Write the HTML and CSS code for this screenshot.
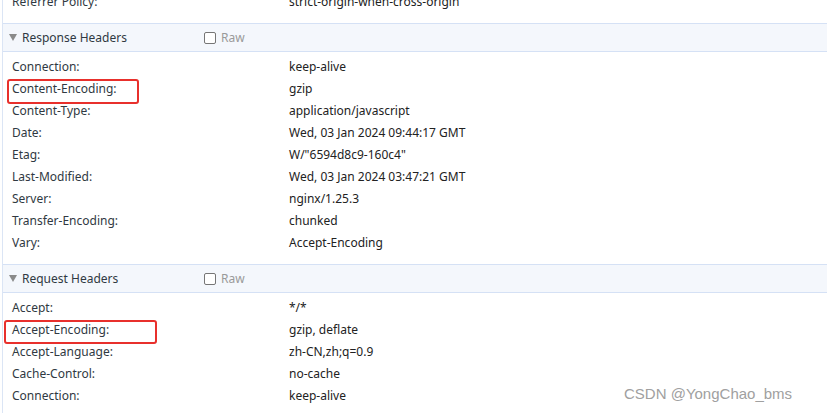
FILE: index.html
```html
<!DOCTYPE html>
<html>
<head>
<meta charset="utf-8">
<link rel="stylesheet" href="styles.css">
</head>
<body>
<div class="panel">
  <div class="rows first">
    <div class="row"><span class="name">Referrer Policy:</span><span class="val">strict-origin-when-cross-origin</span></div>
  </div>
  <div class="head">
    <span class="tri"></span><span class="title">Response Headers</span>
    <span class="raw"><span class="box"></span>Raw</span>
  </div>
  <div class="rows">
    <div class="row"><span class="name">Connection:</span><span class="val">keep-alive</span></div>
    <div class="row"><span class="name mark">Content-Encoding:</span><span class="val">gzip</span></div>
    <div class="row"><span class="name">Content-Type:</span><span class="val">application/javascript</span></div>
    <div class="row"><span class="name">Date:</span><span class="val">Wed, 03 Jan 2024 09:44:17 GMT</span></div>
    <div class="row"><span class="name">Etag:</span><span class="val">W/"6594d8c9-160c4"</span></div>
    <div class="row"><span class="name">Last-Modified:</span><span class="val">Wed, 03 Jan 2024 03:47:21 GMT</span></div>
    <div class="row"><span class="name">Server:</span><span class="val">nginx/1.25.3</span></div>
    <div class="row"><span class="name">Transfer-Encoding:</span><span class="val">chunked</span></div>
    <div class="row"><span class="name">Vary:</span><span class="val">Accept-Encoding</span></div>
  </div>
  <div class="head">
    <span class="tri"></span><span class="title">Request Headers</span>
    <span class="raw"><span class="box"></span>Raw</span>
  </div>
  <div class="rows">
    <div class="row"><span class="name">Accept:</span><span class="val">*/*</span></div>
    <div class="row"><span class="name mark wide">Accept-Encoding:</span><span class="val">gzip, deflate</span></div>
    <div class="row"><span class="name">Accept-Language:</span><span class="val">zh-CN,zh;q=0.9</span></div>
    <div class="row"><span class="name">Cache-Control:</span><span class="val">no-cache</span></div>
    <div class="row"><span class="name">Connection:</span><span class="val">keep-alive</span></div>
  </div>
</div>
<div class="watermark">CSDN @YongChao_bms</div>
</body>
</html>
```
FILE: styles.css
```css
html, body {
  margin: 0;
  padding: 0;
  background: #fff;
  overflow: hidden;
  height: 413px;
}
body {
  font-family: "Noto Sans", "Open Sans", sans-serif;
  font-size: 12px;
  color: #303942;
  position: relative;
}
.panel {
  margin-left: 2px;
  border-left: 1px solid #dbe5f5;
  min-height: 430px;
}
.rows {
  padding: 3px 0 11px 9px;
}
.rows.first {
  margin-top: -10px;
  padding-top: 0;
}
.row {
  display: flex;
  height: 22px;
  align-items: center;
}
.name {
  width: 277px;
  flex: none;
  position: relative;
  color: #303942;
}
.val {
  color: #222;
}
.mark::after {
  content: "";
  position: absolute;
  left: -5px;
  top: -1px;
  width: 128px;
  height: 21px;
  border: 2px solid #e8302c;
  border-radius: 3px;
}
.mark.wide::after {
  left: -8px;
  top: -1px;
  width: 149px;
  height: 20px;
}
.head {
  display: flex;
  align-items: center;
  height: 27px;
  background: #f4f7fc;
  border-top: 1px solid #d5e1f5;
  border-bottom: 1px solid #d5e1f5;
  padding-left: 6px;
  color: #303942;
}
.tri {
  width: 0;
  height: 0;
  border-left: 4px solid transparent;
  border-right: 4px solid transparent;
  border-top: 7px solid #8a8a8a;
  margin-right: 5px;
}
.title {
  width: 182px;
}
.raw {
  display: flex;
  align-items: center;
  color: #9a9a9a;
}
.box {
  width: 10px;
  height: 10px;
  border: 1px solid #767676;
  border-radius: 2px;
  margin-right: 5px;
  background: #fff;
}
.watermark {
  position: absolute;
  left: 624px;
  top: 385px;
  font-family: "Liberation Sans", Arial, sans-serif;
  font-size: 15px;
  color: #a0a0a0;
  text-shadow: 0 0 2px #fff;
}
```
